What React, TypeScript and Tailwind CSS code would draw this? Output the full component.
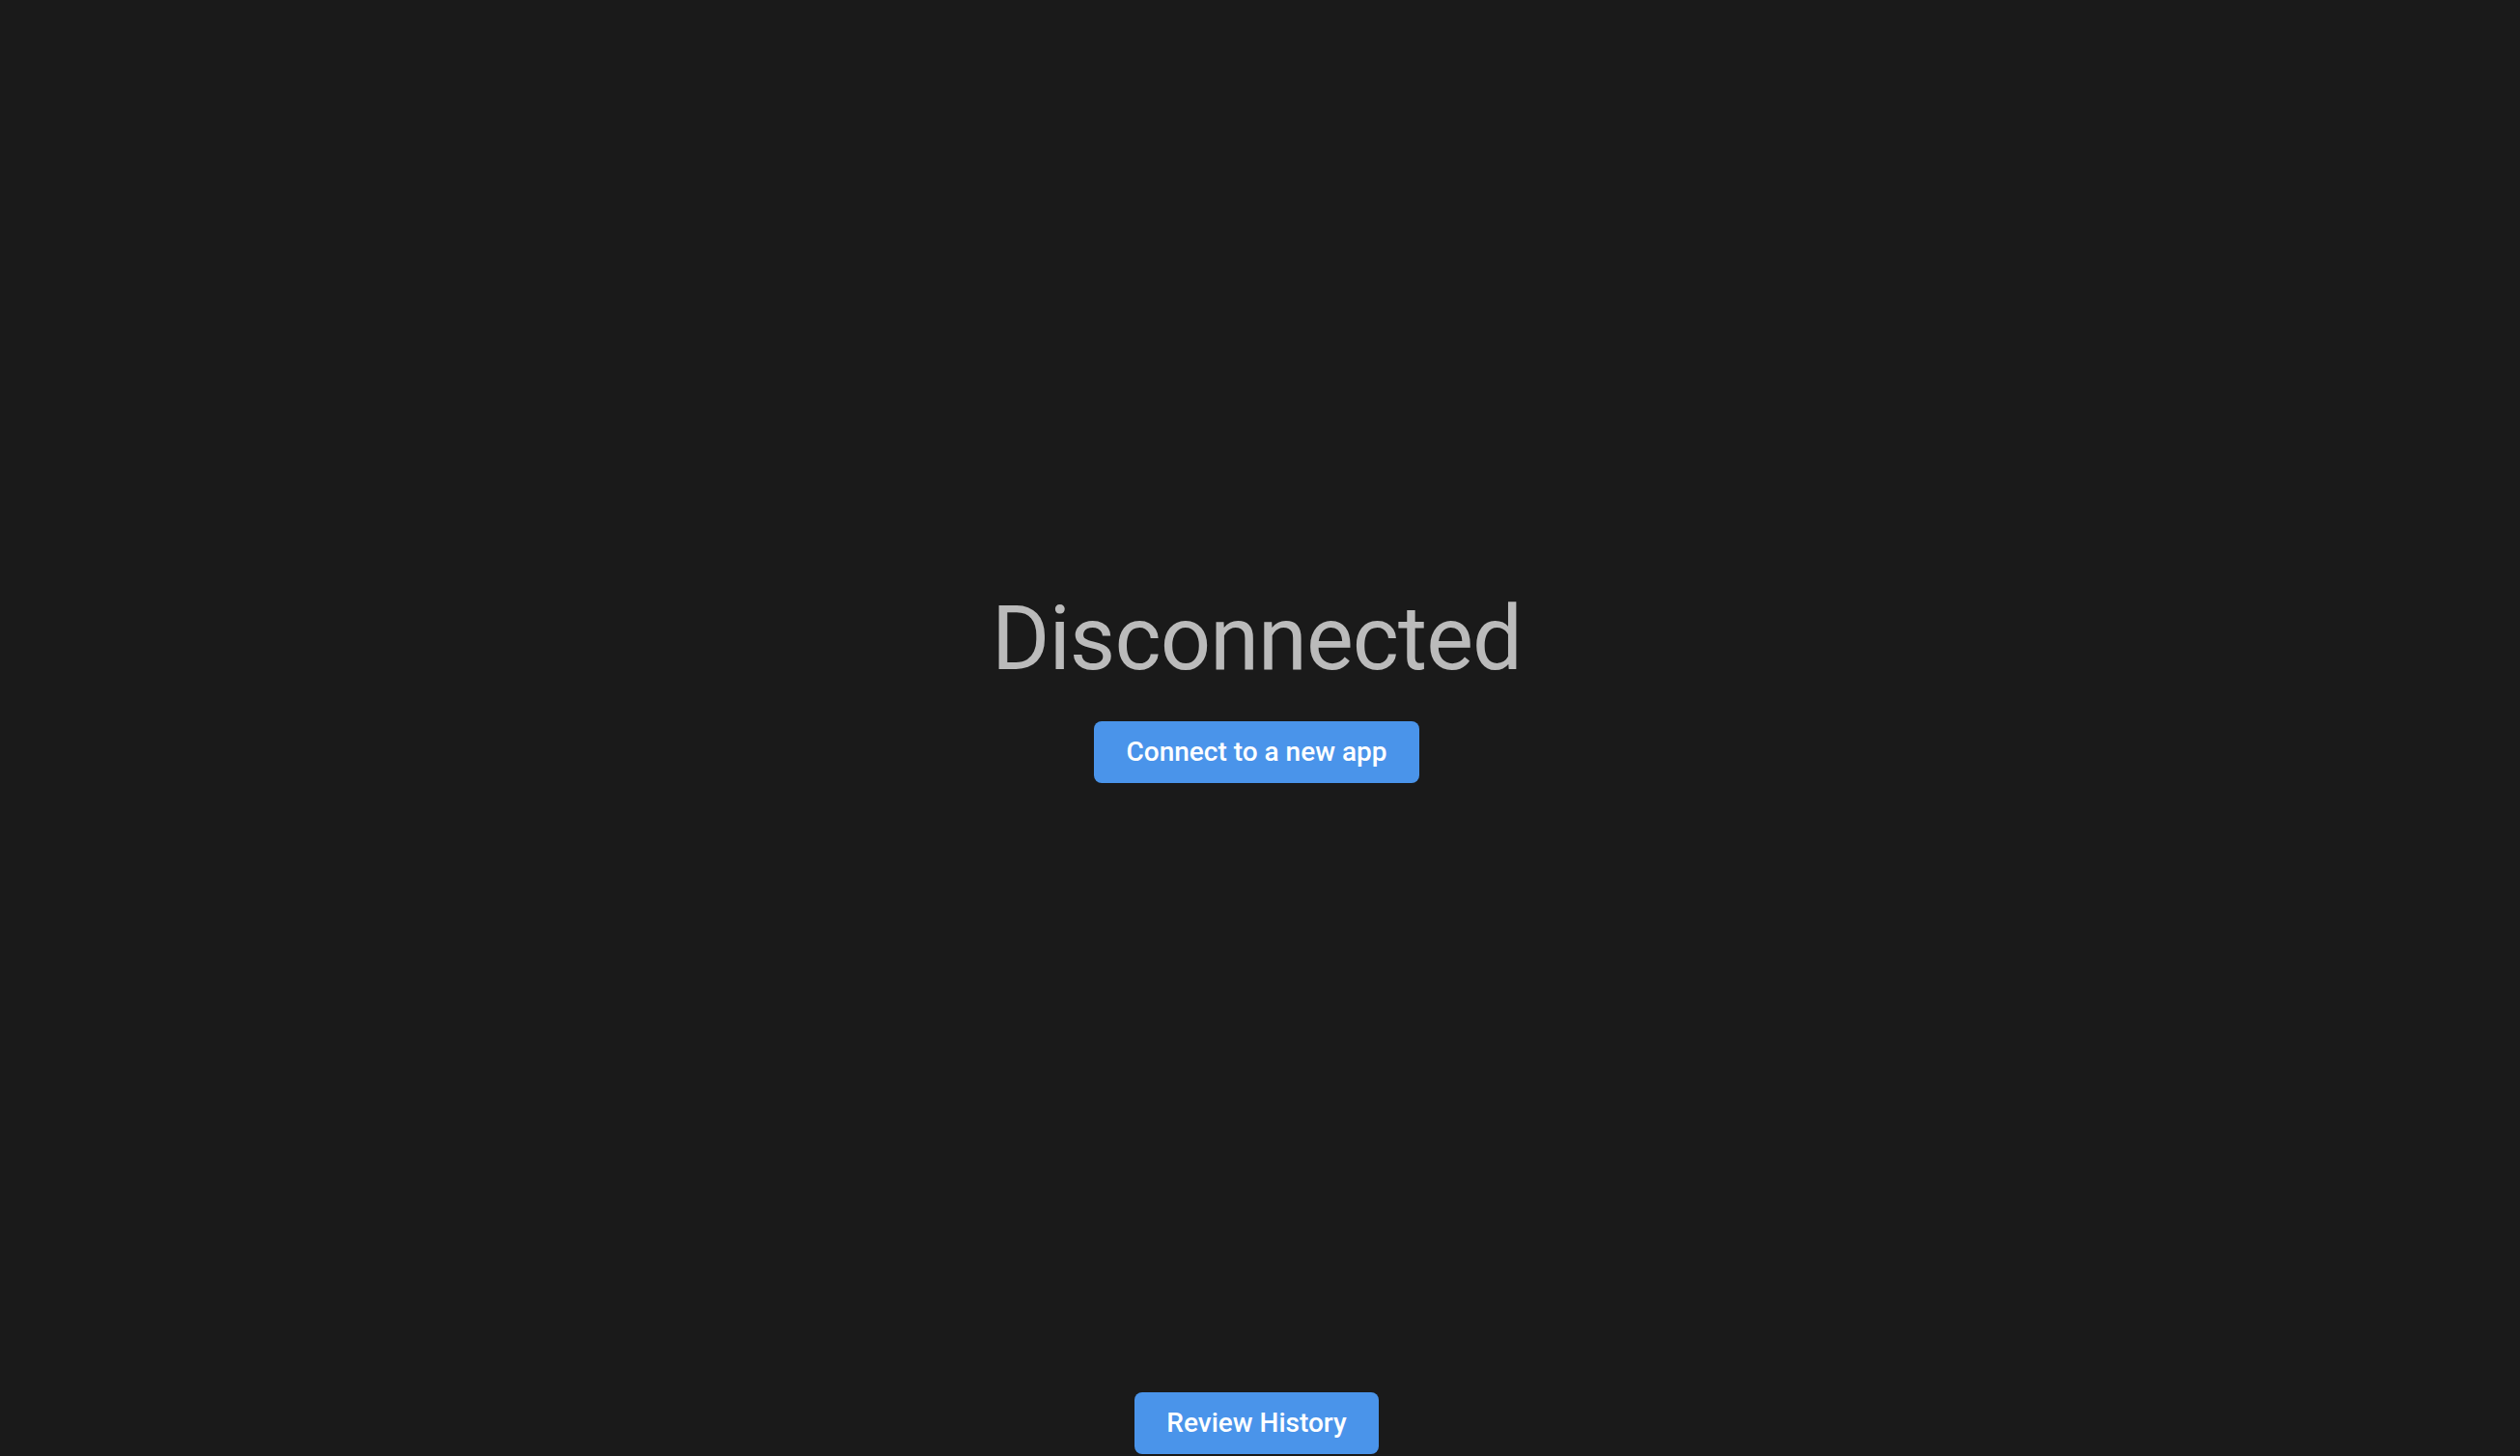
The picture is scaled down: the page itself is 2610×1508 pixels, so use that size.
import React from "react";

export default function App() {
  return (
    <div className="flex h-[1508px] w-full flex-col items-center bg-[#1a1a1a] pr-[7px] font-['Roboto',sans-serif]">
      <div className="flex w-full flex-1 flex-col items-center justify-center pb-[16px]">
        <h1 className="text-[92px] font-normal leading-none tracking-[-0.01em] text-[#bbbbbb]">Disconnected</h1>
        <button className="mt-[39px] h-[64px] rounded-[8px] bg-[#4a94ea] px-[33px] text-[28px] font-medium leading-none text-white">
          Connect to a new app
        </button>
      </div>
      <button className="mb-[2px] h-[64px] rounded-[8px] bg-[#4a94ea] px-[33px] text-[28px] font-medium leading-none text-white">
        Review History
      </button>
    </div>
  );
}
